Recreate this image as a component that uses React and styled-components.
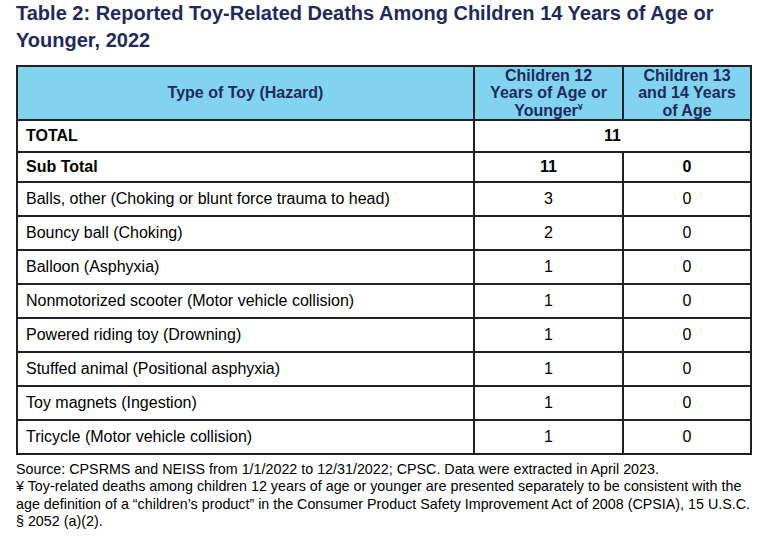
import React from 'react';
import styled, { createGlobalStyle } from 'styled-components';

const GlobalStyle = createGlobalStyle`
  html, body {
    margin: 0;
    padding: 0;
    background: #fff;
  }
  body {
    font-family: "Liberation Sans", Arial, sans-serif;
    color: #000;
  }
`;

const Page = styled.div`
  width: 768px;
  padding: 0 16px;
  box-sizing: border-box;
`;

const Title = styled.h1`
  margin: 0 0 11px;
  font-size: 20px;
  line-height: 27px;
  font-weight: bold;
  color: #1f2a5c;
  white-space: nowrap;
`;

const Table = styled.table`
  width: 734px;
  border-collapse: collapse;
  table-layout: fixed;
  border: 2px solid #222;
`;

const HeadCell = styled.th`
  background: #82d3ef;
  color: #1f2a5c;
  font-size: 16px;
  line-height: 17.3px;
  font-weight: bold;
  text-align: center;
  vertical-align: middle;
  border: 2px solid #222;
  height: 49px;
  padding: 0;
  white-space: nowrap;
`;

const Cell = styled.td`
  border: 2px solid #222;
  font-size: 16px;
  padding: 0 8px;
  text-align: ${p => (p.$center ? 'center' : 'left')};
  font-weight: ${p => (p.$bold ? 'bold' : 'normal')};
  vertical-align: middle;
`;

const Row = styled.tr`
  height: ${p => p.$h}px;
`;

const Yen = styled.sup`
  font-size: 9px;
  line-height: 0;
`;

const Notes = styled.div`
  margin-top: 6px;
  font-size: 14.3px;
  line-height: 17.5px;
  white-space: nowrap;
`;

const rows = [
  ['Balls, other (Choking or blunt force trauma to head)', 3, 0],
  ['Bouncy ball (Choking)', 2, 0],
  ['Balloon (Asphyxia)', 1, 0],
  ['Nonmotorized scooter (Motor vehicle collision)', 1, 0],
  ['Powered riding toy (Drowning)', 1, 0],
  ['Stuffed animal (Positional asphyxia)', 1, 0],
  ['Toy magnets (Ingestion)', 1, 0],
  ['Tricycle (Motor vehicle collision)', 1, 0],
];

export default function App() {
  return (
    <Page>
      <GlobalStyle />
      <Title>
        Table 2: Reported Toy-Related Deaths Among Children 14 Years of Age or
        <br />
        Younger, 2022
      </Title>
      <Table>
        <colgroup>
          <col style={{ width: 457 }} />
          <col style={{ width: 149 }} />
          <col style={{ width: 128 }} />
        </colgroup>
        <thead>
          <tr>
            <HeadCell>Type of Toy (Hazard)</HeadCell>
            <HeadCell>
              Children 12
              <br />
              Years of Age or
              <br />
              Younger<Yen>¥</Yen>
            </HeadCell>
            <HeadCell>
              Children 13
              <br />
              and 14 Years
              <br />
              of Age
            </HeadCell>
          </tr>
        </thead>
        <tbody>
          <Row $h={32}>
            <Cell $bold>TOTAL</Cell>
            <Cell $bold $center colSpan={2}>11</Cell>
          </Row>
          <Row $h={30}>
            <Cell $bold>Sub Total</Cell>
            <Cell $bold $center>11</Cell>
            <Cell $bold $center>0</Cell>
          </Row>
          {rows.map(([name, young, older]) => (
            <Row key={name} $h={34}>
              <Cell>{name}</Cell>
              <Cell $center>{young}</Cell>
              <Cell $center>{older}</Cell>
            </Row>
          ))}
        </tbody>
      </Table>
      <Notes>
        Source: CPSRMS and NEISS from 1/1/2022 to 12/31/2022; CPSC. Data were extracted in April 2023.
        <br />
        ¥ Toy-related deaths among children 12 years of age or younger are presented separately to be consistent with the
        <br />
        age definition of a “children’s product” in the Consumer Product Safety Improvement Act of 2008 (CPSIA), 15 U.S.C.
        <br />
        § 2052 (a)(2).
      </Notes>
    </Page>
  );
}
